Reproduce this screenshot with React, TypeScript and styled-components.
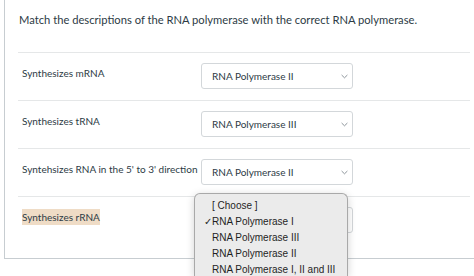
import * as React from "react";
import styled, { createGlobalStyle } from "styled-components";

const GlobalStyle = createGlobalStyle`
  html, body {
    margin: 0;
    padding: 0;
    background: #ffffff;
  }
  body {
    height: 276px;
    overflow: hidden;
    font-family: Lato, "Open Sans", sans-serif;
    color: #2d3b45;
  }
`;

interface MatchRow {
  label: string;
  value: string;
  highlighted?: boolean;
  open?: boolean;
}

const rows: MatchRow[] = [
  { label: "Synthesizes mRNA", value: "RNA Polymerase II" },
  { label: "Synthesizes tRNA", value: "RNA Polymerase III" },
  { label: "Syntehsizes RNA in the 5' to 3' direction", value: "RNA Polymerase II" },
  { label: "Synthesizes rRNA", value: "RNA Polymerase I", highlighted: true, open: true },
];

const options = [
  "[ Choose ]",
  "RNA Polymerase I",
  "RNA Polymerase III",
  "RNA Polymerase II",
  "RNA Polymerase I, II and III",
];

export default function App() {
  return (
    <>
      <GlobalStyle />
      <Card>
        <Question>
          Match the descriptions of the RNA polymerase with the correct RNA
          polymerase.
        </Question>
        <Answers>
          {rows.map((row) => (
            <Row key={row.label}>
              <Label>
                <LabelText $highlighted={row.highlighted}>{row.label}</LabelText>
              </Label>
              <SelectWrap>
                <SelectBox>
                  <span>{row.value}</span>
                  <Chevron viewBox="0 0 8 5" aria-hidden>
                    <path d="M0.7 0.8 L4 4 L7.3 0.8" />
                  </Chevron>
                </SelectBox>
                {row.open && (
                  <Menu>
                    {options.map((opt) => (
                      <MenuItem key={opt}>
                        <Check>{opt === row.value ? "✓" : ""}</Check>
                        {opt}
                      </MenuItem>
                    ))}
                  </Menu>
                )}
              </SelectWrap>
            </Row>
          ))}
        </Answers>
      </Card>
    </>
  );
}

const Card = styled.div`
  margin-left: 4px;
  border-left: 1px solid #c7cdd1;
  border-bottom: 1px solid #c7cdd1;
  height: 259px;
  box-sizing: border-box;
  display: flex;
  flex-direction: column;
`;

const Question = styled.div`
  font-size: 11.2px;
  line-height: 16px;
  padding: 12px 0 0 14px;
  height: 52px;
  flex: none;
  box-sizing: border-box;
`;

const Answers = styled.div`
  margin: 0 4px 0 13px;
  display: flex;
  flex-direction: column;
`;

const Row = styled.div`
  display: flex;
  flex: none;
  border-top: 1px solid #e5e7e8;
  height: 48px;
  box-sizing: border-box;
  padding: 10px 0 0 4px;
  &:last-child {
    height: 62px;
  }
`;

const Label = styled.div`
  width: 179px;
  flex: none;
  font-size: 10px;
  line-height: 16px;
  padding-top: 2px;
  white-space: nowrap;
`;

const LabelText = styled.span<{ $highlighted?: boolean }>`
  background: ${(p) => (p.$highlighted ? "#efdcc6" : "transparent")};
  padding: 2px 0;
`;

const SelectWrap = styled.div`
  position: relative;
`;

const SelectBox = styled.div`
  width: 152px;
  height: 26px;
  box-sizing: border-box;
  border: 1px solid #d3d7da;
  border-radius: 3px;
  display: flex;
  align-items: center;
  justify-content: space-between;
  padding: 0 4px 0 10px;
  font-size: 10px;
  background: #fff;
`;

const Chevron = styled.svg`
  width: 7px;
  height: 5px;
  fill: none;
  stroke: #7b858c;
  stroke-width: 1;
`;

const Menu = styled.div`
  position: absolute;
  left: -7px;
  top: -14px;
  width: 154px;
  height: 83px;
  overflow: hidden;
  box-sizing: border-box;
  background: #ebebeb;
  border: 1px solid #a9a9a9;
  border-bottom: none;
  border-radius: 6px 6px 0 0;
  box-shadow: 0 2px 8px rgba(0, 0, 0, 0.18);
  padding-top: 3px;
  font-family: "Liberation Sans", Arial, sans-serif;
  font-size: 10px;
  color: #1f1f1f;
`;

const MenuItem = styled.div`
  display: flex;
  align-items: center;
  height: 16px;
  flex: none;
  padding-left: 9px;
`;

const Check = styled.span`
  width: 8px;
  flex: none;
  font-size: 10px;
`;
